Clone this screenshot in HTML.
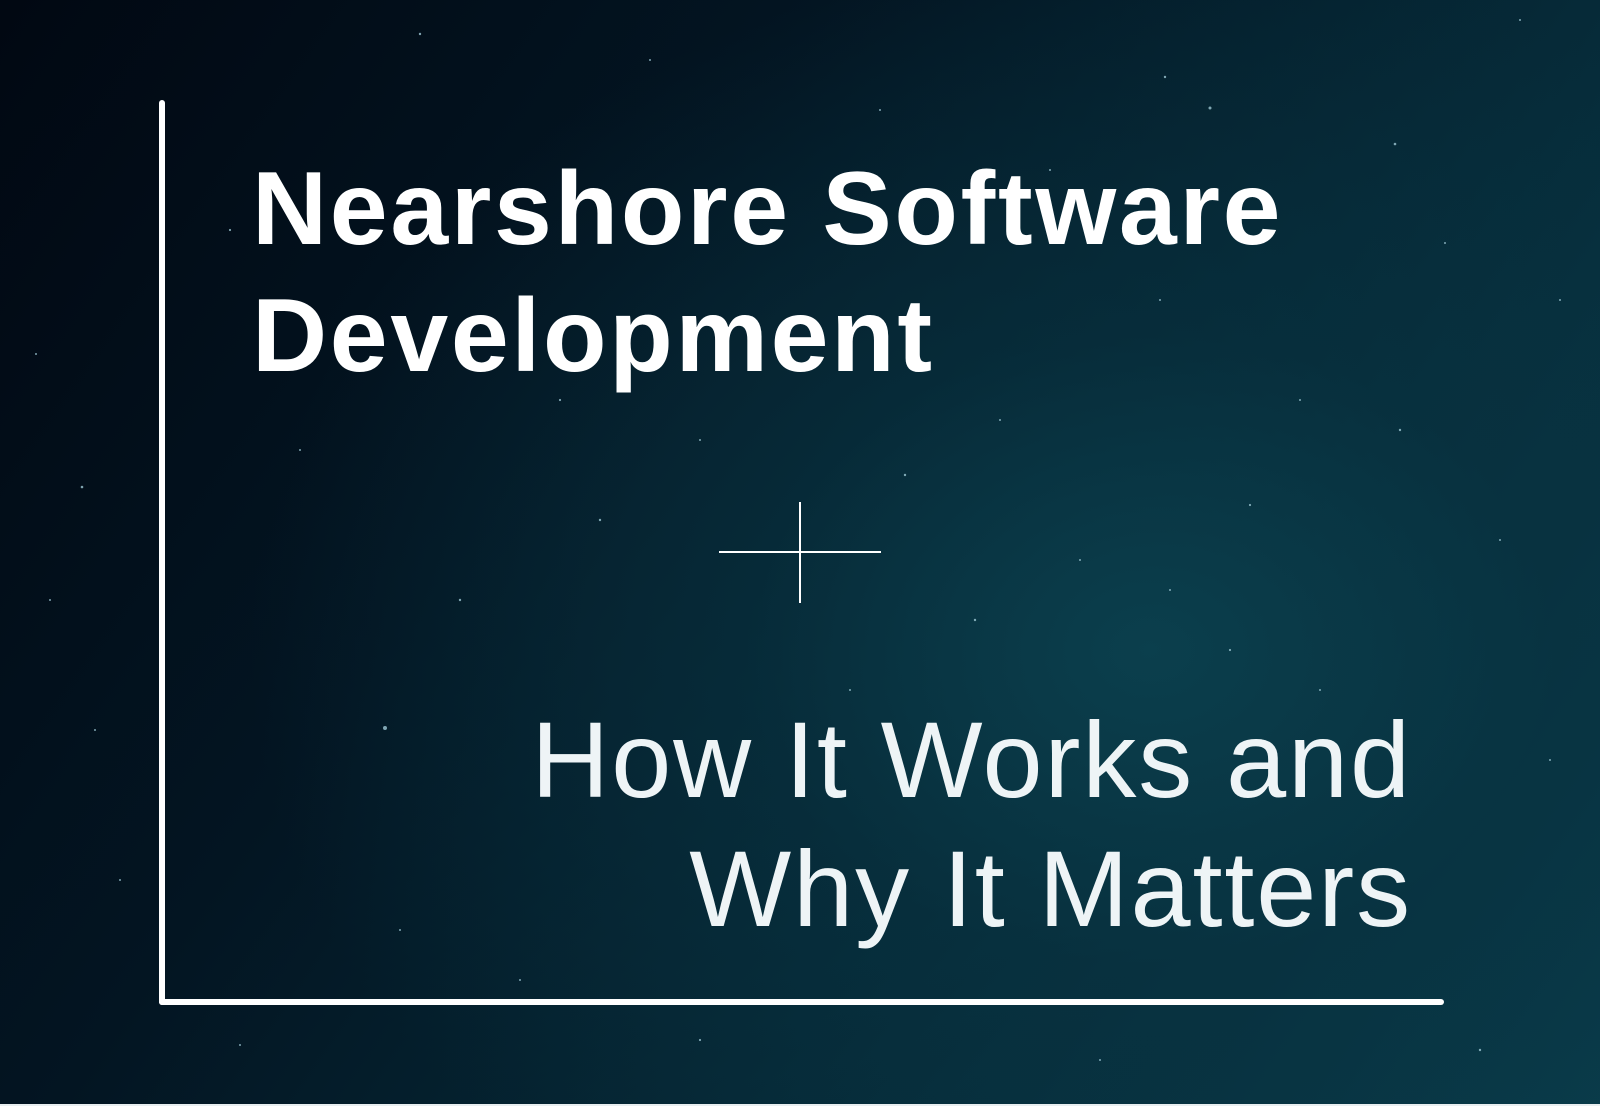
<!DOCTYPE html>
<html><head><meta charset="utf-8"><style>
html,body{margin:0;padding:0}
body{width:1600px;height:1106px;overflow:hidden;position:relative;
background:radial-gradient(ellipse 900px 700px at 1150px 650px,#0b3f4d 0%,rgba(8,50,64,0.6) 45%,rgba(4,20,32,0) 100%),linear-gradient(125deg,#010812 0%,#031522 35%,#062c3a 70%,#0a3d4c 100%);
font-family:"Liberation Sans",Arial,sans-serif;color:#fff}
.l{position:absolute;background:#fff;border-radius:3px}
.t{position:absolute;left:252px;font-weight:bold;font-size:104px;line-height:1;letter-spacing:2.7px;white-space:nowrap}
.s{position:absolute;right:188px;font-weight:normal;font-size:108px;line-height:1;text-align:right;white-space:nowrap;color:#eef4f6;letter-spacing:1.9px}
.bot{position:absolute;left:0;right:0;bottom:0;height:2px;background:#e8eef0}
</style></head><body>
<div class="l" style="left:159px;top:100px;width:6px;height:905px"></div>
<div class="l" style="left:159px;top:999px;width:1285px;height:6px"></div>
<div class="t" style="top:157px">Nearshore Software</div>
<div class="t" style="top:284px">Development</div>
<div style="position:absolute;left:719px;top:551px;width:162px;height:1.5px;background:#fff"></div>
<div style="position:absolute;left:799px;top:502px;width:1.5px;height:101px;background:#fff"></div>
<div class="s" style="top:706px">How It Works and</div>
<div class="s" style="top:835px">Why It Matters</div>
<div class="bot"></div>
<svg width="1600" height="1106" style="position:absolute;left:0;top:0">
<g fill="#9fc8d4" opacity="0.8">
<circle cx="420" cy="34" r="1.2"/><circle cx="1210" cy="108" r="1.5"/><circle cx="1165" cy="77" r="1.2"/><circle cx="1395" cy="144" r="1.3"/><circle cx="1445" cy="243" r="1"/><circle cx="385" cy="728" r="2"/><circle cx="82" cy="487" r="1.3"/><circle cx="36" cy="354" r="1"/><circle cx="600" cy="520" r="1.2"/><circle cx="905" cy="475" r="1.2"/><circle cx="1250" cy="505" r="1.1"/><circle cx="1500" cy="540" r="1"/><circle cx="975" cy="620" r="1.2"/><circle cx="1160" cy="300" r="1"/><circle cx="300" cy="450" r="1"/><circle cx="460" cy="600" r="1.2"/><circle cx="1000" cy="420" r="1"/><circle cx="1550" cy="760" r="1"/><circle cx="1480" cy="1050" r="1.2"/><circle cx="240" cy="1045" r="1"/><circle cx="700" cy="1040" r="1.1"/><circle cx="1100" cy="1060" r="1"/><circle cx="560" cy="400" r="1.1"/><circle cx="1320" cy="690" r="1"/><circle cx="120" cy="880" r="1"/><circle cx="50" cy="600" r="1"/><circle cx="1400" cy="430" r="1.2"/><circle cx="880" cy="110" r="1"/><circle cx="650" cy="60" r="1"/><circle cx="1050" cy="170" r="1"/><circle cx="1300" cy="400" r="1"/><circle cx="1560" cy="300" r="1"/><circle cx="230" cy="230" r="1.1"/><circle cx="1520" cy="20" r="1"/><circle cx="95" cy="730" r="1"/><circle cx="1230" cy="650" r="1.1"/><circle cx="850" cy="690" r="1"/><circle cx="700" cy="440" r="1"/><circle cx="400" cy="930" r="1"/><circle cx="520" cy="980" r="1"/><circle cx="1080" cy="560" r="1"/><circle cx="1170" cy="590" r="1"/>
</g></svg>
</body></html>
